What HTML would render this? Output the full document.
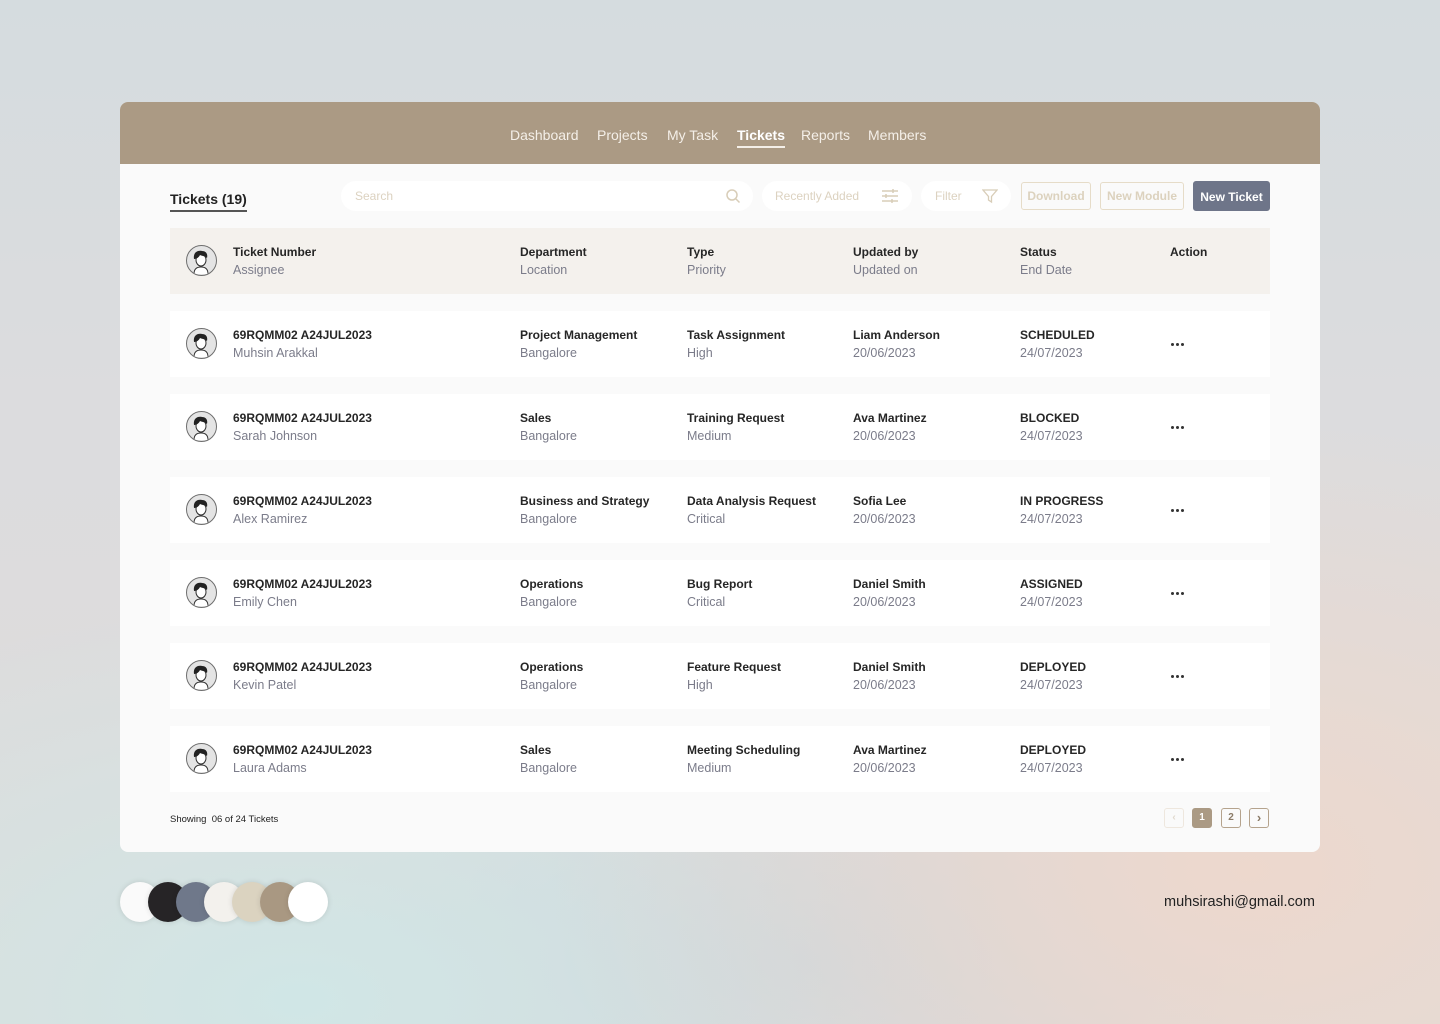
<!DOCTYPE html>
<html><head><meta charset="utf-8"><style>
*{margin:0;padding:0;box-sizing:border-box}
body{width:1440px;height:1024px;position:relative;overflow:hidden;font-family:"Liberation Sans",sans-serif;
background:
radial-gradient(ellipse 700px 450px at 1250px 870px,#edd8cd 0%,rgba(237,216,205,0) 100%),
radial-gradient(ellipse 700px 400px at 300px 1000px,#d0e6e6 0%,rgba(208,230,230,0) 100%),
radial-gradient(ellipse 500px 250px at 800px 960px,#c9d3dc 0%,rgba(201,211,220,0) 100%),
linear-gradient(180deg,#d5dcdf 0%,#dcdcde 40%,#dfdcda 100%);}
.card{position:absolute;left:120px;top:102px;width:1200px;height:750px;background:#fafafa;border-radius:8px;overflow:hidden}
.hdr{height:62px;background:#ab9a84;position:relative}
.nav{position:absolute;top:25px;font-size:14px;color:#f4efe8}
.nav.a{font-weight:bold;color:#fff}
.abs{position:absolute}
.t{font-size:12px;color:#262626;font-weight:bold;white-space:nowrap}
.s{font-size:12.5px;color:#7b7c8a;white-space:nowrap}
.row{position:absolute;left:50px;width:1100px;height:66px;background:#fff}
.row.h{background:#f4f1ed}
.av{position:absolute;left:16px;top:17px;width:31px;height:31px;border-radius:50%;background:#e4e4e4;border:1.5px solid #6e6e6e;overflow:hidden}
.dots{position:absolute;left:1001px;top:32px;display:flex;gap:2px}
.dots i{width:3px;height:3px;background:#333;border-radius:50%}
.pill{position:absolute;top:79px;height:30px;background:#fff;border-radius:15px;font-size:12px;color:#dcd2c0}
.btn{position:absolute;top:80px;height:28px;border:1px solid #e6dcc8;border-radius:3px;font-size:12px;color:#dcd2be;line-height:26px;text-align:center;font-weight:bold}
.pg{position:absolute;top:706px;width:20px;height:20px;border:1px solid #b5a38d;border-radius:3px;font-size:10px;font-weight:bold;color:#8a7a66;text-align:center;line-height:18px}
.c{position:absolute;top:882px;width:40px;height:40px;border-radius:50%;box-shadow:0 0 6px rgba(0,0,0,.12)}
</style></head><body>
<div class="card">
 <div class="hdr">
  <span class="nav" style="left:390px">Dashboard</span>
  <span class="nav" style="left:477px">Projects</span>
  <span class="nav" style="left:547px">My Task</span>
  <span class="nav a" style="left:617px">Tickets</span>
  <div class="abs" style="left:617px;top:44px;width:48px;height:2px;background:#f4efe8"></div>
  <span class="nav" style="left:681px">Reports</span>
  <span class="nav" style="left:748px">Members</span>
 </div>
 <div class="abs" style="left:50px;top:89px;font-size:14px;font-weight:bold;color:#222">Tickets (19)</div>
 <div class="abs" style="left:50px;top:108px;width:77px;height:1.5px;background:#555"></div>
 <div class="pill" style="left:221px;width:412px"><span class="abs" style="left:14px;top:8px">Search</span>
  <svg class="abs" style="left:384px;top:7px" width="16" height="16" viewBox="0 0 16 16" fill="none" stroke="#d8cdb8" stroke-width="1.5"><circle cx="7" cy="7" r="5"/><path d="M11 11l3.5 3.5"/></svg></div>
 <div class="pill" style="left:642px;width:150px"><span class="abs" style="left:13px;top:8px">Recently Added</span>
  <svg class="abs" style="left:119px;top:7px" width="18" height="16" viewBox="0 0 18 16" stroke="#d8cdb8" stroke-width="1.5"><path d="M1 3h16M1 8h16M1 13h16"/><path d="M12 1v4M5 6v4M11 11v4"/></svg></div>
 <div class="pill" style="left:801px;width:90px"><span class="abs" style="left:14px;top:8px">Filter</span>
  <svg class="abs" style="left:61px;top:7px" width="16" height="16" viewBox="0 0 16 16" fill="none" stroke="#d8cdb8" stroke-width="1.3"><path d="M1 2h14L9.5 8.5V14L6.5 12V8.5z"/></svg></div>
 <div class="btn" style="left:901px;width:70px">Download</div>
 <div class="btn" style="left:980px;width:84px">New Module</div>
 <div class="btn" style="left:1073px;width:77px;background:#6e7589;border-color:#6e7589;color:#fff;top:79px;height:30px;line-height:30px">New Ticket</div>

 <div id="rows"></div>

 <div class="abs" style="left:50px;top:712px;font-size:9.5px;color:#222">Showing&nbsp; 06 of 24 Tickets</div>
 <div class="pg" style="left:1044px;border-color:#eee7de;color:#e0d8cc">&lsaquo;</div>
 <div class="pg" style="left:1072px;background:#ab9a84;border-color:#ab9a84;color:#fff">1</div>
 <div class="pg" style="left:1101px">2</div>
 <div class="pg" style="left:1129px;font-size:13px">&rsaquo;</div>
</div>
<div class="c" style="left:120px;background:#fafafa"></div>
<div class="c" style="left:148px;background:#262426"></div>
<div class="c" style="left:176px;background:#6f788a"></div>
<div class="c" style="left:204px;background:#f3f1ed"></div>
<div class="c" style="left:232px;background:#dbd3c0"></div>
<div class="c" style="left:260px;background:#a99882"></div>
<div class="c" style="left:288px;background:#fff"></div>
<div class="abs" style="left:1164px;top:894px;font-size:14.5px;color:#222">muhsirashi@gmail.com</div>
<script>
var d=[["Ticket Number","Assignee","Department","Location","Type","Priority","Updated by","Updated on","Status","End Date"],
["69RQMM02 A24JUL2023","Muhsin Arakkal","Project Management","Bangalore","Task Assignment","High","Liam Anderson","20/06/2023","SCHEDULED","24/07/2023"],
["69RQMM02 A24JUL2023","Sarah Johnson","Sales","Bangalore","Training Request","Medium","Ava Martinez","20/06/2023","BLOCKED","24/07/2023"],
["69RQMM02 A24JUL2023","Alex Ramirez","Business and Strategy","Bangalore","Data Analysis Request","Critical","Sofia Lee","20/06/2023","IN PROGRESS","24/07/2023"],
["69RQMM02 A24JUL2023","Emily Chen","Operations","Bangalore","Bug Report","Critical","Daniel Smith","20/06/2023","ASSIGNED","24/07/2023"],
["69RQMM02 A24JUL2023","Kevin Patel","Operations","Bangalore","Feature Request","High","Daniel Smith","20/06/2023","DEPLOYED","24/07/2023"],
["69RQMM02 A24JUL2023","Laura Adams","Sales","Bangalore","Meeting Scheduling","Medium","Ava Martinez","20/06/2023","DEPLOYED","24/07/2023"]];
var xs=[63,350,517,683,850];
var av='<div class="av"><svg width="28" height="28" viewBox="0 0 28 28"><path d="M7 28c0-5 3-7 7-7s7 2 7 7" fill="#fff" stroke="#333" stroke-width="1"/><ellipse cx="14" cy="14" rx="5" ry="6" fill="#fff" stroke="#333" stroke-width="1"/><path d="M7 13c-1-6 3-9 8-8 4 0 6 3 5 7-2-2-5-2-7-3-1 2-3 4-6 4z" fill="#222"/></svg></div>';
var h='';
d.forEach(function(r,i){
 var top=i==0?126:209+(i-1)*83;
 h+='<div class="row'+(i==0?' h':'')+'" style="top:'+top+'px">'+av;
 for(var k=0;k<5;k++){
  h+='<div class="t abs" style="left:'+xs[k]+'px;top:17px">'+r[2*k]+'</div><div class="s abs" style="left:'+xs[k]+'px;top:35px">'+r[2*k+1]+'</div>';
 }
 if(i==0)h+='<div class="t abs" style="left:1000px;top:17px">Action</div>';
 else h+='<div class="dots"><i></i><i></i><i></i></div>';
 h+='</div>';
});
document.getElementById('rows').innerHTML=h;
</script>
</body></html>
